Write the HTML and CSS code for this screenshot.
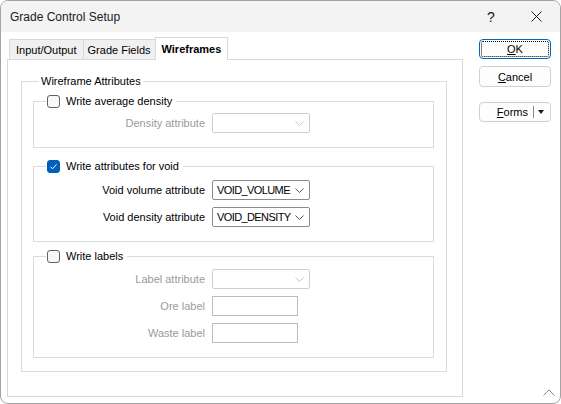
FILE: index.html
```html
<!DOCTYPE html>
<html lang="en">
<head>
    <meta charset="UTF-8" />
    <title>Grade Control Setup</title>
    <link rel="stylesheet" href="styles.css">
</head>
<body>

    <div class="window">

        <!-- title bar -->
        <div class="titlebar">
            <span class="title">Grade Control Setup</span>
            <span class="caption-btn help">?</span>
            <span class="caption-btn close">
                <svg width="11" height="11" viewBox="0 0 11 11"><path d="M0.5 0.5L10.5 10.5M10.5 0.5L0.5 10.5" stroke="#1b1b1b" stroke-width="1"/></svg>
            </span>
        </div>

        <div class="main">

            <!-- tabs + page -->
            <div class="tabs-area">
                <div class="tabs">
                    <div class="tab">Input/Output</div>
                    <div class="tab narrow">Grade Fields</div>
                    <div class="tab active">Wireframes</div>
                </div>

                <div class="panel">
                    <fieldset class="group outer">
                        <legend>Wireframe Attributes</legend>

                        <fieldset class="group sub sub-density">
                            <legend><span class="check"></span>Write average density</legend>
                            <div class="rows disabled">
                                <label>Density attribute</label>
                                <div class="combo"><span></span><svg width="9" height="5" viewBox="0 0 9 5"><path d="M0.5 0.5L4.5 4.5L8.5 0.5" fill="none" stroke="#c4c4c4"/></svg></div>
                            </div>
                        </fieldset>

                        <fieldset class="group sub sub-void">
                            <legend><span class="check checked"><svg width="13" height="13" viewBox="0 0 13 13"><path d="M3.5 6.8L5.5 8.8L9.5 4.5" fill="none" stroke="#fff" stroke-width="1"/></svg></span>Write attributes for void</legend>
                            <div class="rows">
                                <label>Void volume attribute</label>
                                <div class="combo"><span>VOID_VOLUME</span><svg width="9" height="5" viewBox="0 0 9 5"><path d="M0.5 0.5L4.5 4.5L8.5 0.5" fill="none" stroke="#555"/></svg></div>
                                <label>Void density attribute</label>
                                <div class="combo"><span>VOID_DENSITY</span><svg width="9" height="5" viewBox="0 0 9 5"><path d="M0.5 0.5L4.5 4.5L8.5 0.5" fill="none" stroke="#555"/></svg></div>
                            </div>
                        </fieldset>

                        <fieldset class="group sub sub-labels">
                            <legend><span class="check"></span>Write labels</legend>
                            <div class="rows disabled">
                                <label>Label attribute</label>
                                <div class="combo"><span></span><svg width="9" height="5" viewBox="0 0 9 5"><path d="M0.5 0.5L4.5 4.5L8.5 0.5" fill="none" stroke="#c4c4c4"/></svg></div>
                                <label>Ore label</label>
                                <div class="textbox"></div>
                                <label>Waste label</label>
                                <div class="textbox"></div>
                            </div>
                        </fieldset>
                    </fieldset>
                </div>
            </div>

            <!-- dialog buttons -->
            <div class="buttons">
                <div class="btn default"><span><u>O</u>K</span></div>
                <div class="btn"><span><u>C</u>ancel</span></div>
                <div class="btn split">
                    <span class="split-label"><u>F</u>orms</span>
                    <span class="split-sep"></span>
                    <span class="split-arrow"></span>
                </div>
            </div>
        </div>

        <svg class="grip" width="12" height="7" viewBox="0 0 12 7"><path d="M0.5 6.5L6 1L11.5 6.5" fill="none" stroke="#8a8a8a"/></svg>
    </div>

</body>
</html>
```

FILE: styles.css
```css
* {
    box-sizing: border-box;
}

body {
    margin: 0;
    font-family: 'Liberation Sans', Arial, sans-serif;
    font-size: 11px;
    color: #000;
    background: #fff;
}

.window {
    position: relative;
    width: 561px;
    height: 404px;
    border: 1px solid #a3a3a3;
    border-radius: 8px;
    overflow: hidden;
    background: #fff;
    display: flex;
    flex-direction: column;
}

/* title bar */
.titlebar {
    height: 31px;
    flex: none;
    display: flex;
    align-items: center;
    background: #f3f3f3;
}

.title {
    flex: 1;
    padding-left: 9px;
    font-size: 12px;
    color: #1a1a1a;
}

.caption-btn {
    width: 46px;
    height: 31px;
    display: flex;
    align-items: center;
    justify-content: center;
    color: #1a1a1a;
}

.caption-btn.help {
    font-size: 14px;
    padding-left: 2px;
}

.caption-btn.close {
    margin-right: 1px;
}

/* main area */
.main {
    flex: 1;
    display: flex;
    padding-top: 5px;
}

.tabs-area {
    width: 456px;
    margin-left: 6px;
}

.tabs {
    height: 22px;
    display: flex;
    align-items: flex-end;
    padding-left: 2px;
}

.tab {
    height: 20px;
    padding: 0 6px;
    display: flex;
    align-items: center;
    border: 1px solid #d9d9d9;
    border-bottom: none;
    background: #f0f0f0;
    margin-left: -1px;
}

.tab:first-child {
    margin-left: 0;
}

.tab.narrow {
    padding: 0 4px;
}

.tab.active {
    position: relative;
    z-index: 1;
    height: 23px;
    margin-bottom: -1px;
    padding-bottom: 1px;
    background: #fff;
    font-weight: bold;
}

.panel {
    height: 338px;
    border: 1px solid #d9d9d9;
    padding: 14px 15px 0 13px;
    background: #fff;
}

/* group boxes */
fieldset.group {
    margin: 0;
    min-width: 0;
    border: 1px solid #dcdcdc;
}

fieldset.group legend {
    height: 15px;
    line-height: 15px;
    display: flex;
    align-items: center;
}

.outer {
    padding: 0 12px 13px 11px;
}

.outer > legend {
    margin-left: 6px;
    padding: 0 2px;
}

.sub > legend {
    margin-left: 12px;
    padding: 0 4px 0 1px;
}

.sub-density {
    margin-top: 5px !important;
    padding: 4px 0 14px;
}

.sub-void {
    margin-top: 11px !important;
    padding: 6px 0 14px;
}

.sub-labels {
    margin-top: 7px !important;
    padding: 5px 0 14px;
}

.check {
    width: 13px;
    height: 13px;
    margin-right: 6px;
    border: 1px solid #616161;
    border-radius: 3px;
    background: #f7f7f7;
    display: inline-flex;
}

.check.checked {
    border-color: #005fb8;
    background: #005fb8;
}

.check svg {
    margin: -1px;
}

/* label / control rows */
.rows {
    display: grid;
    grid-template-columns: 171px auto;
    column-gap: 7px;
    row-gap: 7px;
    justify-content: start;
    align-items: center;
}

.rows label {
    text-align: right;
}

.rows.disabled label {
    color: #9a9a9a;
}

.combo {
    width: 98px;
    height: 20px;
    padding: 0 5px 0 4px;
    border: 1px solid #8b8b8b;
    border-radius: 2px;
    background: #fff;
    display: flex;
    align-items: center;
    justify-content: space-between;
}

.combo span {
    letter-spacing: -0.6px;
    white-space: nowrap;
}

.rows.disabled .combo {
    border-color: #cfcfcf;
}

.textbox {
    width: 86px;
    height: 20px;
    border: 1px solid #bdbdbd;
    background: #fff;
}

/* dialog buttons */
.buttons {
    margin-left: 16px;
    padding-top: 2px;
    display: flex;
    flex-direction: column;
    gap: 7px;
}

.btn {
    width: 72px;
    height: 21px;
    border: 1px solid #d0d0d0;
    border-radius: 4px;
    background: #fdfdfd;
    display: flex;
    align-items: center;
    justify-content: center;
}

.btn.default {
    height: 20px;
    border-color: #0067c0;
    outline: 1px dotted #000;
    outline-offset: -3px;
}

.btn.split {
    height: 20px;
    margin-top: 8px;
    justify-content: flex-end;
    padding-right: 6px;
}

.split-label {
    margin-right: 5px;
}

.split-sep {
    width: 1px;
    height: 12px;
    background: #8a8a8a;
    margin-right: 4px;
}

.split-arrow {
    width: 0;
    height: 0;
    border-left: 3.5px solid transparent;
    border-right: 3.5px solid transparent;
    border-top: 4px solid #1a1a1a;
}

.grip {
    position: absolute;
    right: 5px;
    bottom: 7px;
}
```
